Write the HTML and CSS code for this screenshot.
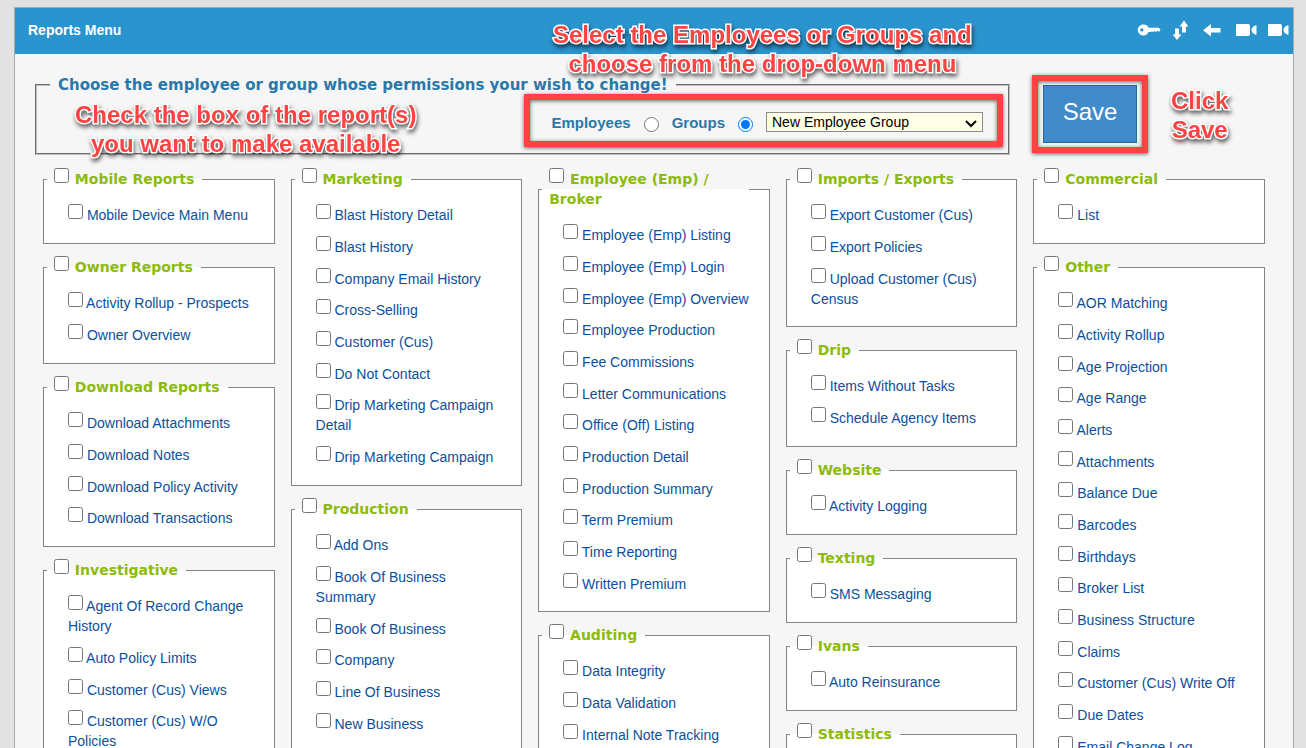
FILE: index.html
```html
<!DOCTYPE html>
<html lang="en">
<head>
<meta charset="utf-8">
<title>Reports Menu</title>
<link rel="stylesheet" href="styles.css">
</head>
<body>
<main class="panel">
  <header class="bar">
    <h1 class="bar-title">Reports Menu</h1>
    <nav class="bar-tools">
      <a href="#" class="tool" aria-label="Permissions"><svg width="24" height="20" viewBox="0 0 24 20"><path fill="#fff" fill-rule="evenodd" d="M6.500 4.500c2.400 0 4.200 1.200 5 3.200h10.200L23.500 9.500l-1 2h-1.200l-.8-.7-.9.900h-1l-.8-.8-.9.900h-1.200l-.8-.6-.8.800H11.500c-.8 2.300-2.600 3.500-5 3.500C3.300 15.500.8 13.100.8 10S3.300 4.500 6.500 4.500zM4.800 8.200a1.700 1.700 0 1 0 0 3.400 1.700 1.700 0 0 0 0-3.400z"/></svg></a>
      <a href="#" class="tool" aria-label="Sort"><svg width="24" height="20" viewBox="0 0 24 20"><path fill="#fff" d="M15 .5l4.500 6H17v6h-4v-6h-2.500zM6 8.500h4v6h2.500L8 20l-4.500-5.500H6z"/></svg></a>
      <a href="#" class="tool" aria-label="Back"><svg width="24" height="20" viewBox="0 0 24 20"><path fill="#fff" d="M2 10.200L10 4v4h9.500v4.500H10v4z"/></svg></a>
      <a href="#" class="tool" aria-label="Video"><svg width="24" height="20" viewBox="0 0 24 20"><path fill="#fff" d="M4 4h11a2 2 0 0 1 2 2v8a2 2 0 0 1-2 2H4a1 1 0 0 1-1-1V5a1 1 0 0 1 1-1zM23.500 5.200v9.600c-1.500 0-5-2-5-4.800s3.500-4.800 5-4.800z"/></svg></a>
      <a href="#" class="tool" aria-label="Training video"><svg width="24" height="20" viewBox="0 0 24 20"><path fill="#fff" d="M4 4h11a2 2 0 0 1 2 2v8a2 2 0 0 1-2 2H4a1 1 0 0 1-1-1V5a1 1 0 0 1 1-1zM23.500 5.200v9.600c-1.500 0-5-2-5-4.800s3.500-4.800 5-4.800z"/></svg></a>
    </nav>
    <p class="note note-select">Select the Employees or Groups and<br>choose from the drop-down menu</p>
  </header>

  <form class="chooser">
    <fieldset class="target">
      <legend>Choose the employee or group whose permissions your wish to change!</legend>
      <div class="target-row">
        <label for="t-emp">Employees</label><input type="radio" id="t-emp" name="target">
        <label for="t-grp">Groups</label><input type="radio" id="t-grp" name="target" checked>
        <select aria-label="Group"><option>New Employee Group</option></select>
      </div>
      <p class="note note-check">Check the box of the report(s)<br>you want to make available</p>
    </fieldset>
    <div class="save-frame"><button type="button" class="save">Save</button></div>
    <p class="note note-save">Click<br>Save</p>
  </form>

  <div class="columns">
    <div class="column">
      <fieldset class="group">
        <legend><label><input type="checkbox"> Mobile Reports</label></legend>
        <ul>
          <li><label><input type="checkbox"> Mobile Device Main Menu</label></li>
        </ul>
      </fieldset>
      <fieldset class="group">
        <legend><label><input type="checkbox"> Owner Reports</label></legend>
        <ul>
          <li><label><input type="checkbox"> Activity Rollup - Prospects</label></li>
          <li><label><input type="checkbox"> Owner Overview</label></li>
        </ul>
      </fieldset>
      <fieldset class="group">
        <legend><label><input type="checkbox"> Download Reports</label></legend>
        <ul>
          <li><label><input type="checkbox"> Download Attachments</label></li>
          <li><label><input type="checkbox"> Download Notes</label></li>
          <li><label><input type="checkbox"> Download Policy Activity</label></li>
          <li><label><input type="checkbox"> Download Transactions</label></li>
        </ul>
      </fieldset>
      <fieldset class="group">
        <legend><label><input type="checkbox"> Investigative</label></legend>
        <ul>
          <li><label><input type="checkbox"> Agent Of Record Change History</label></li>
          <li><label><input type="checkbox"> Auto Policy Limits</label></li>
          <li><label><input type="checkbox"> Customer (Cus) Views</label></li>
          <li><label><input type="checkbox"> Customer (Cus) W/O Policies</label></li>
        </ul>
      </fieldset>
    </div>

    <div class="column">
      <fieldset class="group">
        <legend><label><input type="checkbox"> Marketing</label></legend>
        <ul>
          <li><label><input type="checkbox"> Blast History Detail</label></li>
          <li><label><input type="checkbox"> Blast History</label></li>
          <li><label><input type="checkbox"> Company Email History</label></li>
          <li><label><input type="checkbox"> Cross-Selling</label></li>
          <li><label><input type="checkbox"> Customer (Cus)</label></li>
          <li><label><input type="checkbox"> Do Not Contact</label></li>
          <li><label><input type="checkbox"> Drip Marketing Campaign Detail</label></li>
          <li><label><input type="checkbox"> Drip Marketing Campaign</label></li>
        </ul>
      </fieldset>
      <fieldset class="group">
        <legend><label><input type="checkbox"> Production</label></legend>
        <ul>
          <li><label><input type="checkbox"> Add Ons</label></li>
          <li><label><input type="checkbox"> Book Of Business Summary</label></li>
          <li><label><input type="checkbox"> Book Of Business</label></li>
          <li><label><input type="checkbox"> Company</label></li>
          <li><label><input type="checkbox"> Line Of Business</label></li>
          <li><label><input type="checkbox"> New Business</label></li>
        </ul>
      </fieldset>
    </div>

    <div class="column">
      <fieldset class="group">
        <legend><label><input type="checkbox"> Employee (Emp) / Broker</label></legend>
        <ul>
          <li><label><input type="checkbox"> Employee (Emp) Listing</label></li>
          <li><label><input type="checkbox"> Employee (Emp) Login</label></li>
          <li><label><input type="checkbox"> Employee (Emp) Overview</label></li>
          <li><label><input type="checkbox"> Employee Production</label></li>
          <li><label><input type="checkbox"> Fee Commissions</label></li>
          <li><label><input type="checkbox"> Letter Communications</label></li>
          <li><label><input type="checkbox"> Office (Off) Listing</label></li>
          <li><label><input type="checkbox"> Production Detail</label></li>
          <li><label><input type="checkbox"> Production Summary</label></li>
          <li><label><input type="checkbox"> Term Premium</label></li>
          <li><label><input type="checkbox"> Time Reporting</label></li>
          <li><label><input type="checkbox"> Written Premium</label></li>
        </ul>
      </fieldset>
      <fieldset class="group">
        <legend><label><input type="checkbox"> Auditing</label></legend>
        <ul>
          <li><label><input type="checkbox"> Data Integrity</label></li>
          <li><label><input type="checkbox"> Data Validation</label></li>
          <li><label><input type="checkbox"> Internal Note Tracking</label></li>
        </ul>
      </fieldset>
    </div>

    <div class="column">
      <fieldset class="group">
        <legend><label><input type="checkbox"> Imports / Exports</label></legend>
        <ul>
          <li><label><input type="checkbox"> Export Customer (Cus)</label></li>
          <li><label><input type="checkbox"> Export Policies</label></li>
          <li><label><input type="checkbox"> Upload Customer (Cus) Census</label></li>
        </ul>
      </fieldset>
      <fieldset class="group">
        <legend><label><input type="checkbox"> Drip</label></legend>
        <ul>
          <li><label><input type="checkbox"> Items Without Tasks</label></li>
          <li><label><input type="checkbox"> Schedule Agency Items</label></li>
        </ul>
      </fieldset>
      <fieldset class="group">
        <legend><label><input type="checkbox"> Website</label></legend>
        <ul>
          <li><label><input type="checkbox"> Activity Logging</label></li>
        </ul>
      </fieldset>
      <fieldset class="group">
        <legend><label><input type="checkbox"> Texting</label></legend>
        <ul>
          <li><label><input type="checkbox"> SMS Messaging</label></li>
        </ul>
      </fieldset>
      <fieldset class="group">
        <legend><label><input type="checkbox"> Ivans</label></legend>
        <ul>
          <li><label><input type="checkbox"> Auto Reinsurance</label></li>
        </ul>
      </fieldset>
      <fieldset class="group">
        <legend><label><input type="checkbox"> Statistics</label></legend>
        <ul></ul>
      </fieldset>
    </div>

    <div class="column">
      <fieldset class="group">
        <legend><label><input type="checkbox"> Commercial</label></legend>
        <ul>
          <li><label><input type="checkbox"> List</label></li>
        </ul>
      </fieldset>
      <fieldset class="group">
        <legend><label><input type="checkbox"> Other</label></legend>
        <ul>
          <li><label><input type="checkbox"> AOR Matching</label></li>
          <li><label><input type="checkbox"> Activity Rollup</label></li>
          <li><label><input type="checkbox"> Age Projection</label></li>
          <li><label><input type="checkbox"> Age Range</label></li>
          <li><label><input type="checkbox"> Alerts</label></li>
          <li><label><input type="checkbox"> Attachments</label></li>
          <li><label><input type="checkbox"> Balance Due</label></li>
          <li><label><input type="checkbox"> Barcodes</label></li>
          <li><label><input type="checkbox"> Birthdays</label></li>
          <li><label><input type="checkbox"> Broker List</label></li>
          <li><label><input type="checkbox"> Business Structure</label></li>
          <li><label><input type="checkbox"> Claims</label></li>
          <li><label><input type="checkbox"> Customer (Cus) Write Off</label></li>
          <li><label><input type="checkbox"> Due Dates</label></li>
          <li><label><input type="checkbox"> Email Change Log</label></li>
        </ul>
      </fieldset>
    </div>
  </div>
</main>
</body>
</html>
```
FILE: styles.css
```css
* { box-sizing: border-box; }

body {
  margin: 0;
  padding: 7px 12px 0 14px;
  background: #e2e2e2;
  font: 14px/20px "Liberation Sans", Arial, sans-serif;
  color: #0c4f9c;
}

h1, p, ul, fieldset { margin: 0; padding: 0; min-width: 0; }
ul { list-style: none; }

.panel { border: 1px solid #a9a9a9; background: #f6f6f6; }

.bar {
  position: relative;
  display: flex;
  align-items: center;
  justify-content: space-between;
  height: 46px;
  padding: 0 4px 3px 13px;
  background: #2a94ce;
}
.bar-title { font-size: 14px; line-height: 20px; color: #fff; }
.bar-tools { display: flex; gap: 8px; }
.tool, .tool svg { display: block; }

/* Callouts */
.note {
  position: absolute;
  z-index: 2;
  font-size: 24px;
  line-height: 29px;
  font-weight: bold;
  text-align: center;
  white-space: nowrap;
  color: #ff4343;
  -webkit-text-stroke: 3px #fff;
  paint-order: stroke fill;
  filter: drop-shadow(1px 3px 2px rgba(0, 0, 0, .6));
}
.note-select { left: 538px; top: 12px; }
.note-check { left: 38px; top: 6px; }
.note-save { left: 1156px; top: 32px; }

.chooser {
  position: relative;
  display: flex;
  align-items: flex-start;
  gap: 22px;
  padding: 22px 20px 0;
}

.target {
  position: relative;
  flex: 0 1 975px;
  border: 2px groove #c0c0c0;
  padding: 0 5px 6px 13px;
}
.target legend {
  padding: 0 8px;
  font: bold 15px/18px "DejaVu Sans", Verdana, sans-serif;
  color: #2a78a8;
}
.target-row {
  display: flex;
  align-items: center;
  justify-content: flex-end;
  width: 479px;
  height: 53px;
  margin-left: auto;
  padding: 3px 14px 0;
  border: 6px solid #ff4343;
  box-shadow: 0 1px 4px rgba(0, 0, 0, .6), inset 0 1px 4px rgba(0, 0, 0, .6);
  font-size: 15px;
  font-weight: bold;
  color: #2a78a8;
}
.target-row label { padding-top: 2px; }
.target-row input { width: 15px; height: 15px; margin: 4px 13px 0 13px; }
.target-row select {
  appearance: none;
  width: 217px;
  height: 20px;
  padding: 0 20px 0 5px;
  border: 1px solid #8c8c8c;
  border-radius: 0;
  background: #ffffe8 url("data:image/svg+xml,%3Csvg xmlns='http://www.w3.org/2000/svg' width='12' height='8' viewBox='0 0 12 8'%3E%3Cpath d='M1 1l5 5 5-5' fill='none' stroke='%23000' stroke-width='2'/%3E%3C/svg%3E") no-repeat right 5px top 7px;
  font: 14px "Liberation Sans", Arial, sans-serif;
  color: #000;
}

.save-frame {
  margin-top: -1px;
  border: 6px solid #ff4343;
  padding: 4px 5px;
  box-shadow: 0 1px 4px rgba(0, 0, 0, .6), inset 0 1px 4px rgba(0, 0, 0, .6);
}
.save {
  display: block;
  width: 94px;
  height: 58px;
  border: 1px solid #2a6496;
  padding: 0 6px 4px;
  background: #428bca;
  font: 24px "Liberation Sans", Arial, sans-serif;
  color: #fff;
}

.columns {
  display: grid;
  grid-template-columns: repeat(5, 1fr);
  gap: 16px;
  padding: 14px 28px 20px;
}
.column { display: flex; flex-direction: column; gap: 13px; }

.group {
  border: 1px solid #848484;
  padding: 16px 20px 6px 24px;
  background: #fff;
}
.group legend {
  margin-left: -21px;
  padding: 0 8px 0 7px;
  font: bold 14px/20px "DejaVu Sans", Verdana, sans-serif;
  color: #8cbb0a;
}
.group li { margin-bottom: 12px; }
.group li:nth-child(3n) { margin-bottom: 11px; }
.group input { width: 15px; height: 15px; margin: -4px 0 0; vertical-align: 1px; }
.group legend input { margin-right: 1px; }
```
